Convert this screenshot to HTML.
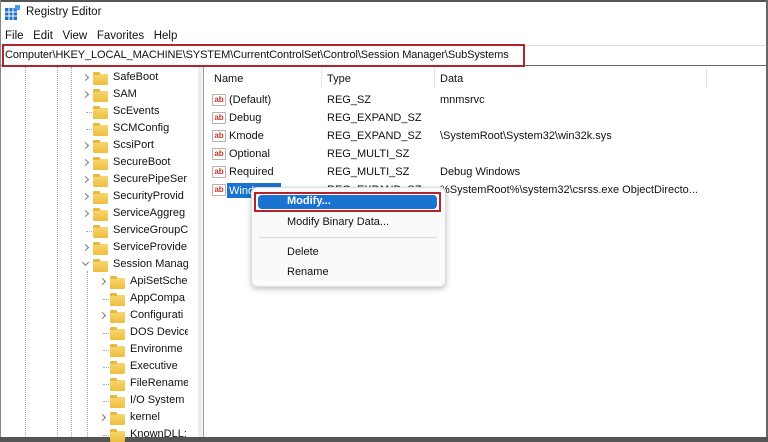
<!DOCTYPE html>
<html><head><meta charset="utf-8"><style>
*{margin:0;padding:0;box-sizing:border-box}
body{width:768px;height:442px;overflow:hidden;background:#fff;font-family:"Liberation Sans",sans-serif;font-size:11px;color:#111;position:relative}
.a{position:absolute;white-space:nowrap}
.f{position:absolute;width:15px;height:11px;background:linear-gradient(#f7d671,#eebf3f);border-radius:1px}
.f:before{content:"";position:absolute;left:0;top:-2px;width:7px;height:3px;background:#e8b93e;border-radius:1px 1px 0 0}
.ar{position:absolute;width:5px;height:5px;border-right:1px solid #777;border-bottom:1px solid #777;transform:rotate(-45deg)}
.ab{position:absolute;width:14px;height:12px;border:1px solid #c7a9a6;border-radius:1px;font-size:8px;font-weight:bold;color:#c0392b;line-height:10px;text-align:center;background:#fff}
</style></head><body>
<div class="a" style="left:0;top:0;width:768px;height:2px;background:#555"></div>
<div class="a" style="left:766px;top:0;width:2px;height:442px;background:#666"></div>
<div class="a" style="left:0;top:0;width:1px;height:442px;background:#888"></div>
<div class="a" style="left:0;top:437px;width:768px;height:5px;background:#555"></div>
<svg class="a" style="left:5px;top:5px" width="15" height="15"><rect x="0" y="3" width="12" height="12" fill="#1f6fc4"/><g stroke="#fff" stroke-width="1"><line x1="4" y1="3" x2="4" y2="15"/><line x1="8" y1="3" x2="8" y2="15"/><line x1="0" y1="7" x2="12" y2="7"/><line x1="0" y1="11" x2="12" y2="11"/></g><rect x="10" y="0" width="5" height="5" fill="#3aa0e8"/></svg>
<div class="a" style="left:26px;top:6px;font-size:11.5px">Registry Editor</div>
<div class="a" style="left:5px;top:30px;font-size:11.5px">File&nbsp;&nbsp;&nbsp;Edit&nbsp;&nbsp;&nbsp;View&nbsp;&nbsp;&nbsp;Favorites&nbsp;&nbsp;&nbsp;Help</div>
<div class="a" style="left:1px;top:45px;width:765px;height:21px;border-top:1px solid #ddd;border-bottom:1px solid #666"></div>
<div class="a" style="left:2px;top:44px;width:523px;height:23px;border:2px solid #b3232b"></div>
<div class="a" style="left:5px;top:49px;font-size:11px;letter-spacing:-0.1px">Computer\HKEY_LOCAL_MACHINE\SYSTEM\CurrentControlSet\Control\Session Manager\SubSystems</div>
<div class="a" style="left:25px;top:67px;height:370px;border-left:1px dotted #aaa"></div>
<div class="a" style="left:57px;top:67px;height:370px;border-left:1px dotted #aaa"></div>
<div class="a" style="left:71px;top:67px;height:370px;border-left:1px dotted #aaa"></div>
<div class="a" style="left:87px;top:271px;height:166px;border-left:1px dotted #aaa"></div>
<div class="a" style="left:198px;top:67px;width:4px;height:370px;background:#eee"></div>
<div class="a" style="left:203px;top:67px;width:1px;height:370px;background:#999"></div>
<div id="tree"></div>
<div class="a" style="left:214px;top:73px">Name</div>
<div class="a" style="left:327px;top:73px">Type</div>
<div class="a" style="left:440px;top:73px">Data</div>
<div class="a" style="left:321px;top:68px;width:1px;height:20px;background:#e5e5e5"></div>
<div class="a" style="left:434px;top:68px;width:1px;height:20px;background:#e5e5e5"></div>
<div class="a" style="left:706px;top:68px;width:1px;height:20px;background:#e5e5e5"></div>
<div id="list"></div>
<div class="a" style="left:227px;top:183px;width:54px;height:15px;background:#1a73d0"></div>
<div class="a" style="left:229px;top:185px;color:#fff">Wind</div>
<div class="a" style="left:251px;top:187px;width:195px;height:100px;background:#fafafa;border:1px solid #ddd;border-radius:6px;box-shadow:0 2px 6px rgba(0,0,0,.25)"></div>
<div class="a" style="left:258px;top:195px;width:179px;height:14px;background:#1a73d0;border-radius:4px"></div>
<div class="a" style="left:254px;top:192px;width:187px;height:20px;border:2px solid #b3232b"></div>
<div class="a" style="left:287px;top:195px;color:#fff;font-weight:bold">Modify...</div>
<div class="a" style="left:287px;top:216px">Modify Binary Data...</div>
<div class="a" style="left:259px;top:237px;width:178px;height:1px;background:#ddd"></div>
<div class="a" style="left:287px;top:246px">Delete</div>
<div class="a" style="left:287px;top:266px">Rename</div>
<script>
var t=[["SafeBoot",1,1],["SAM",1,1],["ScEvents",1,0],["SCMConfig",1,0],["ScsiPort",1,1],["SecureBoot",1,1],["SecurePipeSer",1,1],["SecurityProvid",1,1],["ServiceAggreg",1,1],["ServiceGroupC",1,0],["ServiceProvide",1,1],["Session Manag",1,2],["ApiSetSche",2,1],["AppCompa",2,0],["Configurati",2,1],["DOS Device",2,0],["Environme",2,0],["Executive",2,0],["FileRename",2,0],["I/O System",2,0],["kernel",2,1],["KnownDLL:",2,0]],h="";
t.forEach(function(r,i){var y=71+17*i,x=r[1]==1?93:110;
if(r[2]==1)h+='<div class="ar" style="left:'+(x-10)+'px;top:'+(y+4)+'px"></div>';
else if(r[2]==2)h+='<div class="ar" style="left:'+(x-10)+'px;top:'+(y+2)+'px;transform:rotate(45deg)"></div>';
else h+='<div class="a" style="left:'+(x-7)+'px;top:'+(y+7)+'px;width:6px;border-top:1px dotted #aaa"></div>';
h+='<div class="f" style="left:'+x+'px;top:'+(y+3)+'px"></div><div class="a" style="left:'+(x+20)+'px;top:'+y+'px;width:'+(188-x-20)+'px;overflow:hidden">'+r[0]+'</div>';});
document.getElementById("tree").innerHTML=h;
var l=[["(Default)","REG_SZ","mnmsrvc"],["Debug","REG_EXPAND_SZ",""],["Kmode","REG_EXPAND_SZ","\\SystemRoot\\System32\\win32k.sys"],["Optional","REG_MULTI_SZ",""],["Required","REG_MULTI_SZ","Debug Windows"],["","REG_EXPAND_SZ","%SystemRoot%\\system32\\csrss.exe ObjectDirecto..."]];h="";
l.forEach(function(r,i){var y=94+18*i;h+='<div class="ab" style="left:212px;top:'+(y)+'px">ab</div><div class="a" style="left:229px;top:'+y+'px">'+r[0]+'</div><div class="a" style="left:327px;top:'+y+'px">'+r[1]+'</div><div class="a" style="left:440px;top:'+y+'px">'+r[2]+'</div>';});
document.getElementById("list").innerHTML=h;
</script>
</body></html>
